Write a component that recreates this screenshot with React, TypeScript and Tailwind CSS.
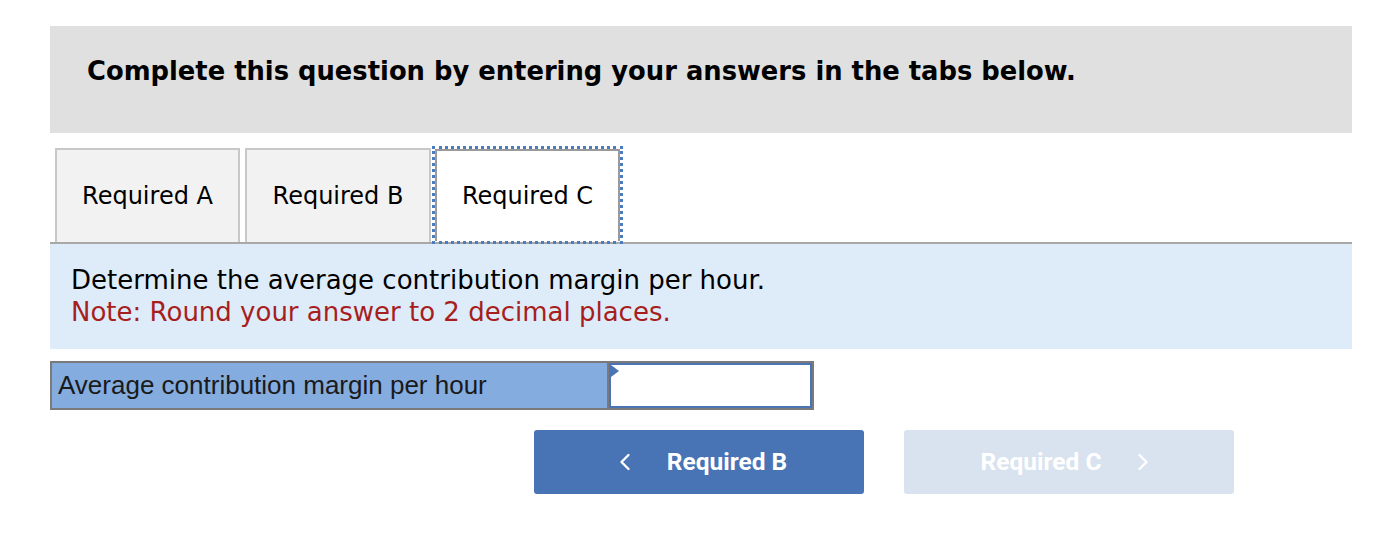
import { ChevronLeft, ChevronRight } from "lucide-react";

const TABS = ["Required A", "Required B", "Required C"];

export default function App() {
  return (
    <div className="w-[1390px] h-[554px] bg-white pt-[26px] pl-[50px] pr-[38px] [font-family:'DejaVu_Sans',Verdana,sans-serif]">
      <div className="h-[107px] bg-[#e0e0e0] pl-[37px] pt-[26px]">
        <h1 className="text-[25.8px] font-bold text-black">
          Complete this question by entering your answers in the tabs below.
        </h1>
      </div>

      <div className="mt-[15px] flex items-end border-b-2 border-[#a8a8a8] h-[96px] pl-[5px]">
        <div className="w-[185px] h-[94px] bg-[#f2f2f2] border-2 border-b-0 border-[#c8c8c8] flex items-center justify-center text-[24px] text-black">
          {TABS[0]}
        </div>
        <div className="ml-[5px] w-[186px] h-[94px] bg-[#f2f2f2] border-2 border-b-0 border-[#c8c8c8] flex items-center justify-center text-[24px] text-black">
          {TABS[1]}
        </div>
        <div className="ml-px w-[191px] h-[98px] -mb-[2px] border-[3px] border-dotted border-[#4a7cc1] flex">
          <div className="flex-1 bg-white border-t-2 border-r-2 border-l-2 border-[#9a9a9a] flex items-center justify-center text-[24px] text-black">
            {TABS[2]}
          </div>
        </div>
      </div>

      <div className="h-[105px] bg-[#deebf8] pl-[21px] pt-[20px] text-[26px] leading-[32px]">
        <p className="text-black">Determine the average contribution margin per hour.</p>
        <p className="text-[#a61e1e]">Note: Round your answer to 2 decimal places.</p>
      </div>

      <div className="mt-[12px] flex w-[764px] h-[49px] border-2 border-[#7a7a7a] [font-family:'Liberation_Sans',Arial,sans-serif]">
        <div className="w-[557px] bg-[#85acdf] border-r-2 border-[#7a7a7a] flex items-center pl-[6px] text-[26px] text-[#1a1a1a]">
          Average contribution margin per hour
        </div>
        <div className="relative flex-1 bg-white border-2 border-[#4a74b4]">
          <span className="absolute left-0 top-0 w-0 h-0 border-y-[6px] border-y-transparent border-l-[8px] border-l-[#4a74b4]" />
        </div>
      </div>

      <div className="mt-[20px] flex gap-[40px] pl-[484px] [font-family:Roboto,sans-serif]">
        <button className="w-[330px] h-[64px] rounded-[3px] bg-[#4873b4] text-white font-bold text-[24.5px] flex items-center justify-center gap-[28px]">
          <ChevronLeft size={28} strokeWidth={2} />
          <span>Required B</span>
        </button>
        <button className="w-[330px] h-[64px] rounded-[3px] bg-[#d9e3ef] text-white font-bold text-[24.5px] flex items-center justify-center gap-[28px]">
          <span>Required C</span>
          <ChevronRight size={28} strokeWidth={2} />
        </button>
      </div>
    </div>
  );
}
